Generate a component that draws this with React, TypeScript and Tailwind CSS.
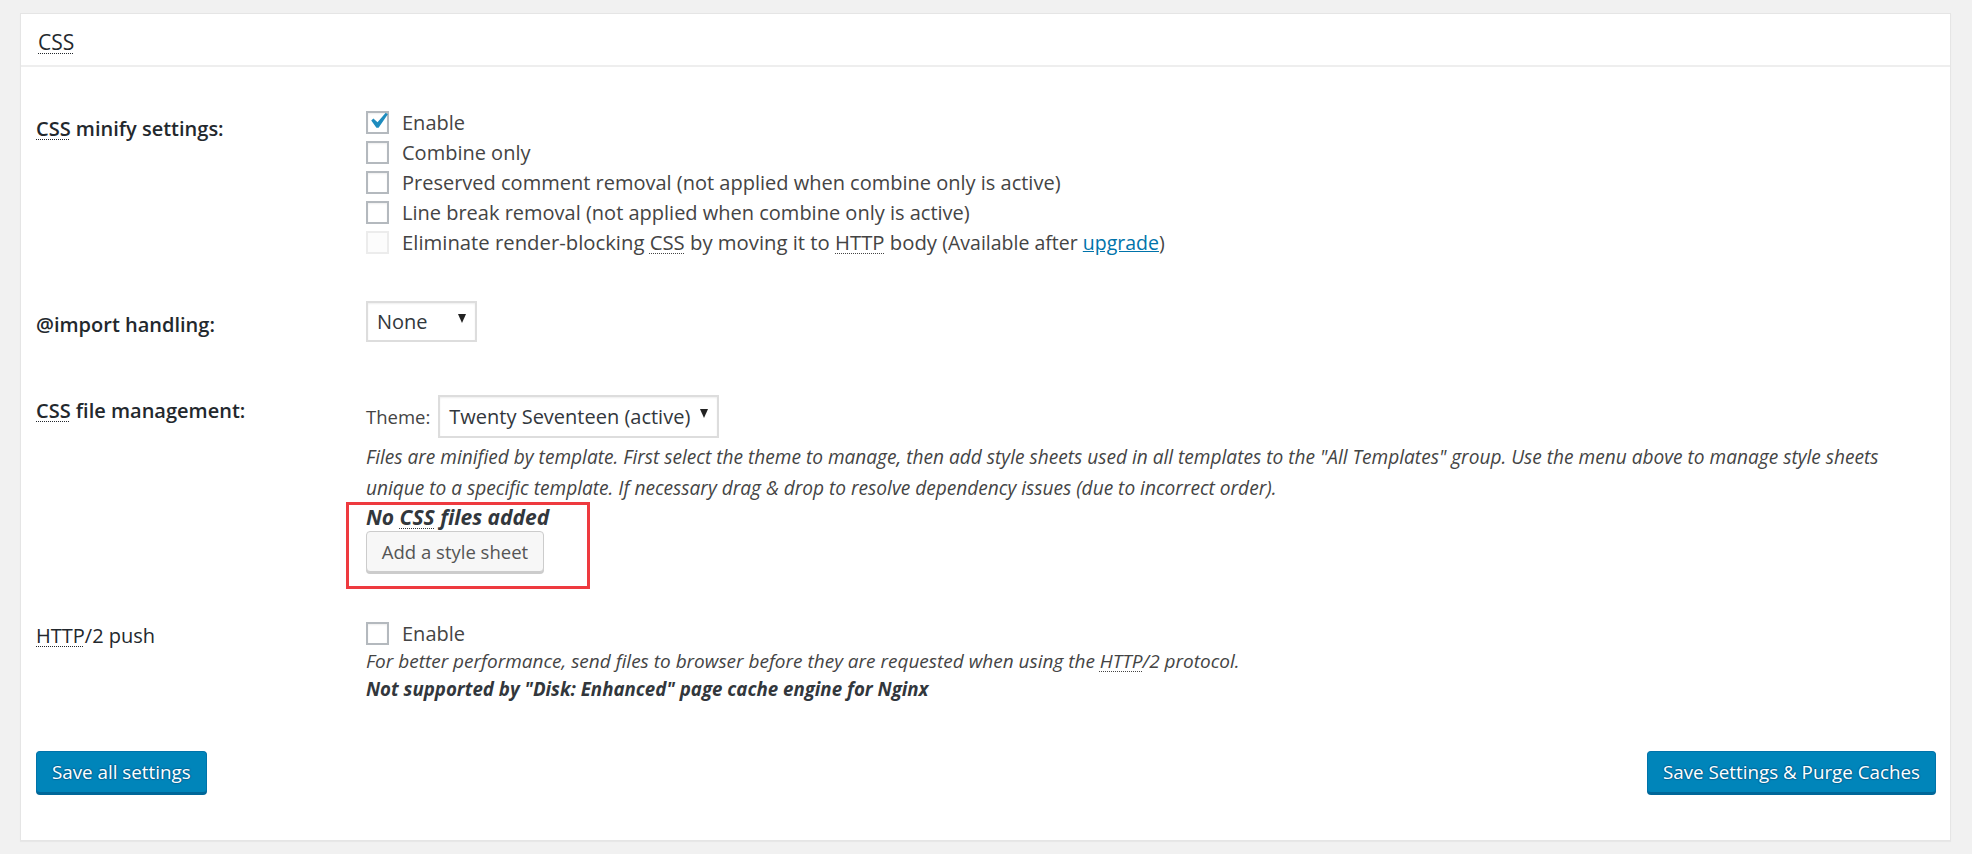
import React from 'react';

const Abbr: React.FC<{ children: React.ReactNode }> = ({ children }) => (
  <abbr className="no-underline underline decoration-dotted decoration-1 underline-offset-[3px]">{children}</abbr>
);

interface CheckProps {
  checked?: boolean;
  disabled?: boolean;
  children: React.ReactNode;
}

const CheckRow: React.FC<CheckProps> = ({ checked, disabled, children }) => (
  <label className="flex items-center h-[23px] gap-[13px]">
    <span
      className={
        disabled
          ? 'w-[23px] h-[23px] shrink-0 border-2 border-[#ececec] bg-[#fcfcfc]'
          : 'w-[23px] h-[23px] shrink-0 border-2 border-[#b4b9be] bg-white shadow-[inset_0_1px_2px_rgba(0,0,0,0.07)] flex items-center justify-center overflow-visible'
      }
    >
      {checked && (
        <svg viewBox="0 0 20 20" className="w-[32px] h-[32px] shrink-0 -mt-[3px]">
          <path fill="#1e8cbe" d="M14.83 4.89l1.34.94-5.81 8.38H9.02L5.78 9.67l1.34-1.25 2.57 2.4z" />
        </svg>
      )}
    </span>
    <span className="whitespace-nowrap">{children}</span>
  </label>
);

const Select: React.FC<{ value: string; className?: string }> = ({ value, className }) => (
  <div className={`flex items-center justify-between border-2 border-[#ddd] bg-white shadow-[inset_0_1px_2px_rgba(0,0,0,0.07)] pl-[9px] pr-[9px] text-[#32373c] ${className ?? ''}`}>
    <span>{value}</span>
    <svg viewBox="0 0 8 9" className="w-[8px] h-[9px] -mt-[6px]">
      <polygon points="0,0 8,0 4,9" fill="#222" />
    </svg>
  </div>
);

const PrimaryButton: React.FC<{ children: React.ReactNode }> = ({ children }) => (
  <button className="h-[42px] px-[15px] rounded-[4px] bg-[#0085ba] border border-[#0073aa] border-b-[#006799] shadow-[0_2px_0_#006799] text-white text-[18.8px] leading-[24px] [text-shadow:0_-1px_1px_#006799,1px_0_1px_#006799,0_1px_1px_#006799,-1px_0_1px_#006799]">
    {children}
  </button>
);

export default function App() {
  return (
    <div className="min-h-screen bg-[#f1f1f1] pt-[13px] pl-[20px] pr-[21px] pb-[15px] font-['Open_Sans',sans-serif] text-[20px] leading-[24px] text-[#444]">
      <div className="bg-white border border-[#e5e5e5] shadow-[0_1px_1px_rgba(0,0,0,0.04)]">
        <div className="h-[53px] border-b-2 border-[#eee] pl-[17px] flex items-center pt-[4px] text-[21px] text-[#23282d]">
          <Abbr>CSS</Abbr>
        </div>

        <div className="pl-[15px] pr-[14px] pb-[47px]">
          {/* CSS minify settings */}
          <div className="grid grid-cols-[330px_1fr] pt-[44px]">
            <div className="pt-[6px] font-semibold text-[#23282d]">
              <Abbr>CSS</Abbr> minify settings:
            </div>
            <div className="flex flex-col gap-[7px]">
              <CheckRow checked>Enable</CheckRow>
              <CheckRow>Combine only</CheckRow>
              <CheckRow>Preserved comment removal (not applied when combine only is active)</CheckRow>
              <CheckRow>Line break removal (not applied when combine only is active)</CheckRow>
              <CheckRow disabled>
                <span className="text-[20.3px]">
                  Eliminate render-blocking <Abbr>CSS</Abbr> by moving it to <Abbr>HTTP</Abbr> body
                </span>{' '}
                <span className="text-[19.5px]">
                  (Available after{' '}
                  <a href="#" className="text-[#0073aa] underline">
                    upgrade
                  </a>
                  )
                </span>
              </CheckRow>
            </div>
          </div>

          {/* @import handling */}
          <div className="grid grid-cols-[330px_1fr] mt-[47px]">
            <div className="pt-[12px] font-semibold text-[#23282d]">@import handling:</div>
            <div>
              <Select value="None" className="w-[111px] h-[41px]" />
            </div>
          </div>

          {/* CSS file management */}
          <div className="grid grid-cols-[330px_1fr] mt-[53px]">
            <div className="pt-[4px] font-semibold text-[#23282d]">
              <Abbr>CSS</Abbr> file management:
            </div>
            <div className="flex flex-col">
              <div className="flex items-center gap-[8px]">
                <span className="text-[18.5px]">Theme:</span>
                <Select value="Twenty Seventeen (active)" className="w-[281px] h-[43px]" />
              </div>
              <p className="italic text-[19.1px] leading-[31px] mt-[4px]">
                Files are minified by template. First select the theme to manage, then add style sheets used in all templates to the "All Templates" group. Use the menu above to manage style sheets
                <br />
                unique to a specific template. If necessary drag &amp; drop to resolve dependency issues (due to incorrect order).
              </p>
              <div className="relative">
                <div className="font-bold italic text-[21px] leading-[26px] text-[#32373c]">
                  No <Abbr>CSS</Abbr> files added
                </div>
                <button className="mt-[1px] h-[41px] w-[178px] rounded-[4px] bg-[#f7f7f7] border border-[#ccc] shadow-[0_2px_0_#ccc] text-[#555] text-[18.5px]">
                  Add a style sheet
                </button>
                <div className="absolute left-[-20px] top-[-2px] w-[244px] h-[87px] border-[3px] border-[#ee3a3f]" />
              </div>
            </div>
          </div>

          {/* HTTP/2 push */}
          <div className="grid grid-cols-[330px_1fr] mt-[50px]">
            <div className="pt-[2px] text-[#23282d]">
              <Abbr>HTTP</Abbr>/2 push
            </div>
            <div className="flex flex-col">
              <CheckRow>Enable</CheckRow>
              <p className="italic text-[19px] leading-[27px] mt-[3px]">
                For better performance, send files to browser before they are requested when using the <Abbr>HTTP</Abbr>/2 protocol.
              </p>
              <p className="italic font-bold text-[18.7px] leading-[27px] text-[#32373c]">
                Not supported by "Disk: Enhanced" page cache engine for Nginx
              </p>
            </div>
          </div>

          <div className="flex justify-between items-center mt-[49px]">
            <PrimaryButton>Save all settings</PrimaryButton>
            <PrimaryButton>Save Settings &amp; Purge Caches</PrimaryButton>
          </div>
        </div>
      </div>
    </div>
  );
}
